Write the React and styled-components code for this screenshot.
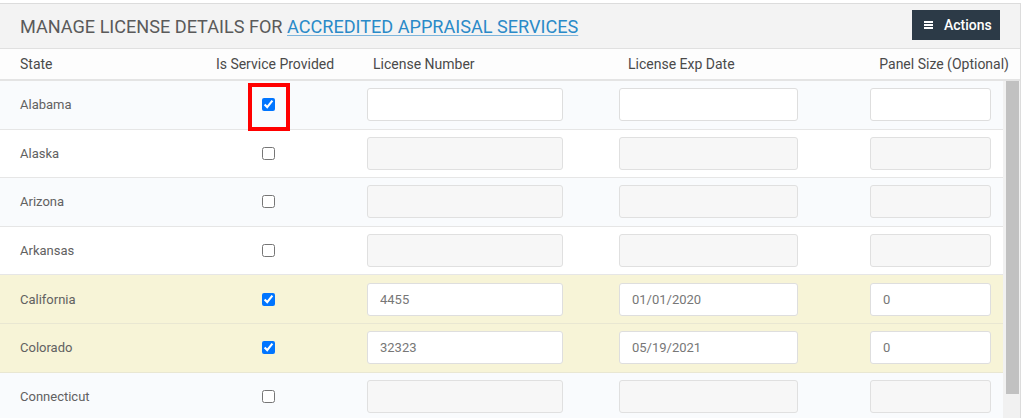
import styled, { createGlobalStyle } from "styled-components";

const states = [
	{ name: "Alabama", provided: true, editable: true, marked: true },
	{ name: "Alaska" },
	{ name: "Arizona" },
	{ name: "Arkansas" },
	{
		name: "California",
		provided: true,
		editable: true,
		saved: true,
		number: "4455",
		expires: "01/01/2020",
		panel: "0",
	},
	{
		name: "Colorado",
		provided: true,
		editable: true,
		saved: true,
		number: "32323",
		expires: "05/19/2021",
		panel: "0",
	},
	{ name: "Connecticut" },
];

const App = () => {
	return (
		<>
			<GlobalStyle />
			<Panel>
				<TitleBar>
					<Title>
						Manage License Details for{" "}
						<TitleLink href="#">Accredited Appraisal Services</TitleLink>
					</Title>
					<ActionsButton type="button">
						<MenuIcon width="9" height="8" viewBox="0 0 9 8">
							<rect x="0" y="0" width="9" height="2" fill="#fff" />
							<rect x="0" y="3" width="9" height="2" fill="#fff" />
							<rect x="0" y="6" width="9" height="2" fill="#fff" />
						</MenuIcon>
						Actions
					</ActionsButton>
				</TitleBar>
				<HeaderRow>
					<HeadCell>State</HeadCell>
					<HeadCell align="center">Is Service Provided</HeadCell>
					<HeadCell indent>License Number</HeadCell>
					<HeadCell indent>License Exp Date</HeadCell>
					<HeadCell align="right">Panel Size (Optional)</HeadCell>
				</HeaderRow>
				<Body>
					<RowList>
						{states.map((s, i) => (
							<Row key={s.name} striped={i % 2 === 0} saved={s.saved}>
								<StateCell>{s.name}</StateCell>
								<CheckCell>
									<input type="checkbox" defaultChecked={!!s.provided} />
									{s.marked && <Marker />}
								</CheckCell>
								<FieldCell>
									<Field
										width={196}
										disabled={!s.editable}
										defaultValue={s.number || ""}
									/>
								</FieldCell>
								<FieldCell>
									<Field
										width={179}
										disabled={!s.editable}
										defaultValue={s.expires || ""}
									/>
								</FieldCell>
								<FieldCell>
									<Field
										width={121}
										disabled={!s.editable}
										defaultValue={s.panel || ""}
									/>
								</FieldCell>
							</Row>
						))}
					</RowList>
					<ScrollTrack>
						<ScrollThumb />
					</ScrollTrack>
				</Body>
			</Panel>
		</>
	);
};

const GlobalStyle = createGlobalStyle`
	html, body {
		margin: 0;
		padding: 0;
		background: #fff;
		overflow: hidden;
	}

	body {
		font-family: Roboto, "Liberation Sans", sans-serif;
	}

	* {
		box-sizing: border-box;
	}
`;

const Panel = styled.div`
	margin-top: 3px;
	width: 1021px;
	border-top: 1px solid #dcdcdc;
	border-right: 1px solid #dcdcdc;
`;

const TitleBar = styled.div`
	height: 45px;
	background: #f3f3f3;
	border-bottom: 1px solid #e0e0e0;
	display: flex;
	align-items: center;
	justify-content: space-between;
	padding: 0 20px;
`;

const Title = styled.h2`
	margin: 1px 0 0;
	font-size: 18.1px;
	font-weight: 400;
	text-transform: uppercase;
	color: #5a5a5a;
`;

const TitleLink = styled.a`
	color: #2a8ac8;
	text-decoration: underline;
	text-decoration-color: #7db5dc;
	text-underline-offset: 2px;
`;

const ActionsButton = styled.button`
	height: 30px;
	width: 88px;
	margin-bottom: 2px;
	background: #2c3a47;
	border: none;
	color: #fff;
	display: flex;
	align-items: center;
	gap: 11px;
	padding: 0 12px;
	font-family: Roboto, "Liberation Sans", sans-serif;
	font-size: 14px;
	font-weight: 500;
	cursor: pointer;
`;

const MenuIcon = styled.svg`
	flex-shrink: 0;
	display: block;
`;

const HeaderRow = styled.div`
	height: 32px;
	background: #fdfdfd;
	border-bottom: 2px solid #e4e4e4;
	display: grid;
	grid-template-columns: 200px 150px 255px 255px 1fr;
	align-items: center;
`;

const HeadCell = styled.div`
	font-size: 14px;
	font-weight: 400;
	color: #4a4a4a;
	text-align: ${(props) => props.align || "left"};
	padding-left: ${(props) =>
		props.indent ? "23px" : props.align ? "0" : "20px"};
	padding-right: ${(props) => (props.align === "right" ? "11px" : "0")};
	white-space: nowrap;
`;

const Body = styled.div`
	height: 337px;
	overflow: hidden;
	display: flex;
`;

const RowList = styled.div`
	flex: 1;
	min-width: 0;
`;

const ScrollTrack = styled.div`
	width: 17px;
	flex-shrink: 0;
	background: #f1f1f1;
	padding: 0 1px 0 3px;
	margin-top: -1px;
`;

const ScrollThumb = styled.div`
	height: 314px;
	background: #c1c1c1;
`;

const Row = styled.div`
	height: 48.6px;
	display: grid;
	grid-template-columns: 200px 136px 252px 251px 1fr;
	align-items: center;
	background: ${(props) =>
		props.saved ? "#f7f4d7" : props.striped ? "#f9fbfd" : "#fff"};
	border-bottom: 1px solid
		${(props) => (props.saved ? "#e9e7d2" : "#e6e6e6")};
`;

const StateCell = styled.div`
	padding-left: 20px;
	font-size: 13px;
	color: #616161;
`;

const CheckCell = styled.div`
	position: relative;
	display: flex;
	justify-content: center;
	align-items: center;
	height: 100%;

	input {
		margin: 0;
		width: 13px;
		height: 13px;
	}
`;

const Marker = styled.span`
	position: absolute;
	left: 48px;
	top: 2px;
	width: 42px;
	height: 48px;
	border: 4px solid #ff0000;
	pointer-events: none;
`;

const FieldCell = styled.div`
	padding-left: 31px;
`;

const Field = styled.input.attrs({ type: "text" })`
	display: block;
	width: ${(props) => props.width}px;
	height: 33px;
	border: 1px solid #dedede;
	border-radius: 3px;
	background: #fff;
	padding: 0 12px;
	font-family: Roboto, "Liberation Sans", sans-serif;
	font-size: 13px;
	color: #777;
	outline: none;

	&:disabled {
		background: #f7f7f7;
		border-color: #e0e0e0;
	}
`;

export default App;
